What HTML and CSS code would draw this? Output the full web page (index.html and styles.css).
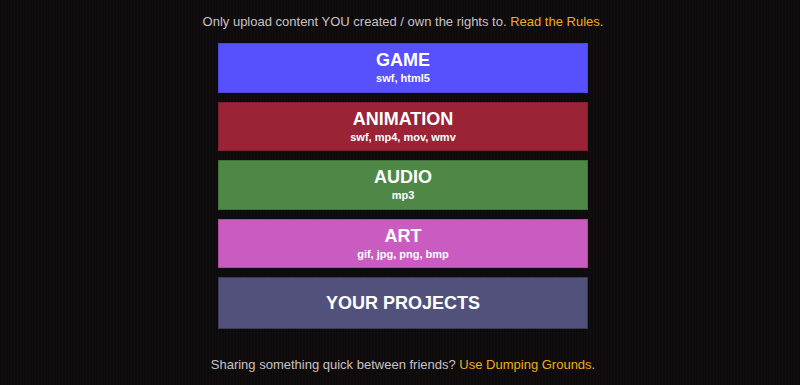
FILE: index.html
```html
<!DOCTYPE html>
<html>
<head>
<meta charset="utf-8">
<link rel="stylesheet" href="styles.css">
</head>
<body>
<div class="page">
  <p class="note">Only upload content YOU created / own the rights to. <a class="link" href="#">Read the Rules</a>.</p>
  <div class="options">
    <a class="option game" href="#"><span class="title">GAME</span><span class="sub">swf, html5</span></a>
    <a class="option animation" href="#"><span class="title">ANIMATION</span><span class="sub">swf, mp4, mov, wmv</span></a>
    <a class="option audio" href="#"><span class="title">AUDIO</span><span class="sub">mp3</span></a>
    <a class="option art" href="#"><span class="title">ART</span><span class="sub">gif, jpg, png, bmp</span></a>
    <a class="option projects" href="#"><span class="title">YOUR PROJECTS</span></a>
  </div>
  <p class="note bottom">Sharing something quick between friends? <a class="link" href="#">Use Dumping Grounds</a>.</p>
</div>
</body>
</html>
```

FILE: styles.css
```css
html, body {
  margin: 0;
  padding: 0;
}
body {
  background-color: #0e0b0c;
  background-image: repeating-linear-gradient(90deg, #0e0b0c 0px, #0e0b0c 2px, #120e0f 2px, #120e0f 3px);
  font-family: "Liberation Sans", Arial, sans-serif;
  width: 800px;
  height: 385px;
  overflow: hidden;
}
.page {
  display: flex;
  flex-direction: column;
  align-items: center;
  padding-top: 14px;
  padding-left: 6px;
}
.note {
  margin: 0;
  font-size: 13px;
  line-height: 16px;
  color: #c9c2c5;
  text-align: center;
}
.link {
  color: #f0ab1e;
  text-decoration: none;
}
.options {
  display: flex;
  flex-direction: column;
  gap: 9px;
  width: 370px;
  margin-top: 13px;
}
.option {
  box-sizing: border-box;
  height: 49.5px;
  display: flex;
  flex-direction: column;
  align-items: center;
  text-decoration: none;
  color: #ffffff;
  font-weight: bold;
  border: 1px solid;
  padding-top: 6px;
}
.title {
  font-size: 18px;
  line-height: 21px;
}
.sub {
  font-size: 11px;
  line-height: 13px;
  margin-top: 1px;
}
.game { background: #5650fd; border-color: #4b46dc; }
.animation { background: #9a2336; border-color: #7e1d2c; }
.audio { background: #4f8747; border-color: #416f3a; }
.art { background: #ca5cc1; border-color: #a94ca1; }
.projects {
  background: #52517b;
  border-color: #3b3a5a;
  height: 51.5px;
  justify-content: center;
  padding-top: 1px;
}
.bottom {
  margin-top: 28px;
}
```
